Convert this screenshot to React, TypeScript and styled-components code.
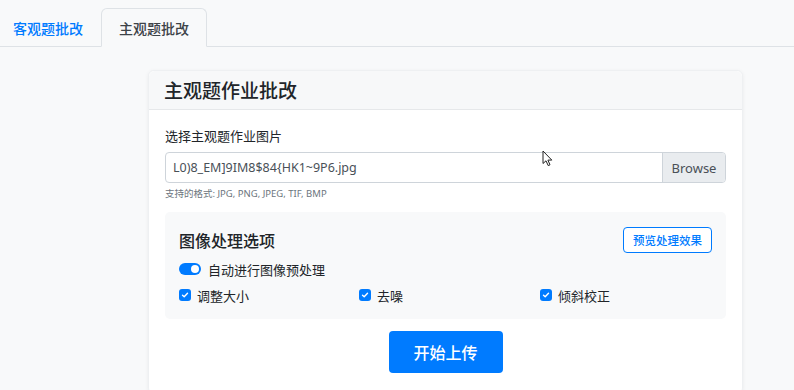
import * as React from 'react';
import styled, { createGlobalStyle } from 'styled-components';

const FONT = `"Noto Sans", "Noto Sans CJK SC", sans-serif`;
const PRIMARY = '#007bff';
const FILE_NAME = 'L0)8_EM]9IM8$84{HK1~9P6.jpg';

const GlobalStyle = createGlobalStyle`
  html, body {
    margin: 0;
    padding: 0;
    background: #f8f9fa;
    font-family: ${FONT};
    color: #212529;
  }
`;

const Page = styled.div`
  position: relative;
  width: 794px;
  height: 390px;
  overflow: hidden;
  padding-top: 8px;
  box-sizing: border-box;
`;

const TabBar = styled.div`
  display: flex;
  align-items: flex-end;
  border-bottom: 1px solid #dee2e6;
  height: 38px;
`;

const Tab = styled.div<{ $active?: boolean }>`
  box-sizing: border-box;
  padding: 0 ${p => (p.$active ? '17px' : '12px')};
  margin-bottom: -1px;
  display: flex;
  align-items: center;
  font-size: 14px;
  font-weight: 500;
  color: ${p => (p.$active ? '#3d4348' : PRIMARY)};
  background: ${p => (p.$active ? '#f8f9fa' : 'transparent')};
  border: 1px solid ${p => (p.$active ? '#dee2e6' : 'transparent')};
  border-bottom-color: ${p => (p.$active ? '#f8f9fa' : 'transparent')};
  border-radius: 6px 6px 0 0;
  margin-left: ${p => (p.$active ? '5px' : '0')};
  height: ${p => (p.$active ? '39px' : '38px')};
`;

const Card = styled.div`
  margin: 23px 0 0 148px;
  width: 593px;
  background: #fff;
  border: 1px solid #eef0f2;
  border-radius: 6px;
  box-shadow: 0 1px 4px rgba(0, 0, 0, 0.06);
`;

const CardHeader = styled.div`
  height: 38px;
  background: #f7f8f9;
  border-bottom: 1px solid #e6e8ea;
  display: flex;
  align-items: center;
  padding: 0 15px;
  font-size: 19px;
  font-weight: 500;
  color: #212529;
  border-radius: 6px 6px 0 0;
`;

const CardBody = styled.div`
  padding: 17px 16px 20px 16px;
  display: flex;
  flex-direction: column;
`;

const Label = styled.div`
  font-size: 13px;
  color: #212529;
  line-height: 18px;
  margin-bottom: 7px;
`;

const FileInput = styled.div`
  display: flex;
  height: 31px;
  box-sizing: border-box;
  border: 1px solid #ced4da;
  border-radius: 4px;
  overflow: hidden;
`;

const FileName = styled.div`
  flex: 1;
  display: flex;
  align-items: center;
  padding: 0 7px;
  font-size: 12.5px;
  color: #495057;
`;

const BrowseButton = styled.div`
  width: 62px;
  display: flex;
  align-items: center;
  justify-content: center;
  background: #e9ecef;
  border-left: 1px solid #ced4da;
  font-size: 13px;
  color: #495057;
`;

const Help = styled.div`
  font-size: 9.5px;
  color: #6c757d;
  margin-top: 4px;
  line-height: 14px;
`;

const OptionsPanel = styled.div`
  margin-top: 11px;
  background: #f8f9fa;
  border-radius: 5px;
  padding: 15px 14px 14px 14px;
  height: 107px;
  box-sizing: border-box;
  display: flex;
  flex-direction: column;
`;

const OptionsHead = styled.div`
  display: flex;
  justify-content: space-between;
  align-items: center;
`;

const OptionsTitle = styled.div`
  font-size: 16px;
  font-weight: 500;
  color: #212529;
`;

const OutlineButton = styled.div`
  height: 26px;
  box-sizing: border-box;
  padding: 0 9px;
  display: flex;
  align-items: center;
  border: 1px solid ${PRIMARY};
  border-radius: 4px;
  font-size: 11.5px;
  font-weight: 500;
  color: ${PRIMARY};
  background: #fff;
`;

const SwitchRow = styled.div`
  display: flex;
  align-items: center;
  gap: 7px;
  font-size: 13px;
  margin-top: 6px;
  height: 20px;
`;

const SwitchTrack = styled.div`
  width: 22px;
  height: 12px;
  border-radius: 6px;
  background: ${PRIMARY};
  position: relative;
`;

const SwitchKnob = styled.div`
  position: absolute;
  right: 2px;
  top: 2px;
  width: 8px;
  height: 8px;
  border-radius: 50%;
  background: #fff;
`;

const CheckGrid = styled.div`
  display: grid;
  grid-template-columns: 180px 181px 1fr;
  margin-top: 6px;
`;

const CheckItem = styled.div`
  display: flex;
  align-items: center;
  gap: 6px;
  font-size: 13px;
  height: 20px;
`;

const CheckBox = styled.div`
  width: 12px;
  height: 12px;
  border-radius: 3px;
  background: ${PRIMARY};
  display: flex;
  align-items: center;
  justify-content: center;
`;

const SubmitRow = styled.div`
  display: flex;
  justify-content: center;
  margin-top: 12px;
`;

const PrimaryButton = styled.div`
  width: 114px;
  height: 42px;
  border-radius: 4px;
  background: ${PRIMARY};
  color: #fff;
  font-size: 16px;
  font-weight: 500;
  display: flex;
  align-items: center;
  justify-content: center;
`;

const Cursor = styled.svg`
  position: absolute;
  left: 542px;
  top: 150px;
`;

const Check = ({ label }: { label: string }) => (
  <CheckItem>
    <CheckBox>
      <svg width="8" height="8" viewBox="0 0 8 8">
        <path d="M1.5 4.2 L3.2 5.8 L6.5 2.2" stroke="#fff" strokeWidth="1.4" fill="none" strokeLinecap="round" strokeLinejoin="round" />
      </svg>
    </CheckBox>
    {label}
  </CheckItem>
);

export default function App() {
  return (
    <Page>
      <GlobalStyle />
      <TabBar>
        <Tab>客观题批改</Tab>
        <Tab $active>主观题批改</Tab>
      </TabBar>
      <Card>
        <CardHeader>主观题作业批改</CardHeader>
        <CardBody>
          <Label>选择主观题作业图片</Label>
          <FileInput>
            <FileName>{FILE_NAME}</FileName>
            <BrowseButton>Browse</BrowseButton>
          </FileInput>
          <Help>支持的格式: JPG, PNG, JPEG, TIF, BMP</Help>
          <OptionsPanel>
            <OptionsHead>
              <OptionsTitle>图像处理选项</OptionsTitle>
              <OutlineButton>预览处理效果</OutlineButton>
            </OptionsHead>
            <SwitchRow>
              <SwitchTrack>
                <SwitchKnob />
              </SwitchTrack>
              自动进行图像预处理
            </SwitchRow>
            <CheckGrid>
              <Check label="调整大小" />
              <Check label="去噪" />
              <Check label="倾斜校正" />
            </CheckGrid>
          </OptionsPanel>
          <SubmitRow>
            <PrimaryButton>开始上传</PrimaryButton>
          </SubmitRow>
        </CardBody>
      </Card>
      <Cursor width="11" height="17" viewBox="0 0 11 17">
        <path d="M1 1 L1 13.5 L4 10.8 L6.2 15.6 L8 14.8 L5.9 10.1 L9.8 10.1 Z" fill="#fff" stroke="#222" strokeWidth="1" strokeLinejoin="round" />
      </Cursor>
    </Page>
  );
}
